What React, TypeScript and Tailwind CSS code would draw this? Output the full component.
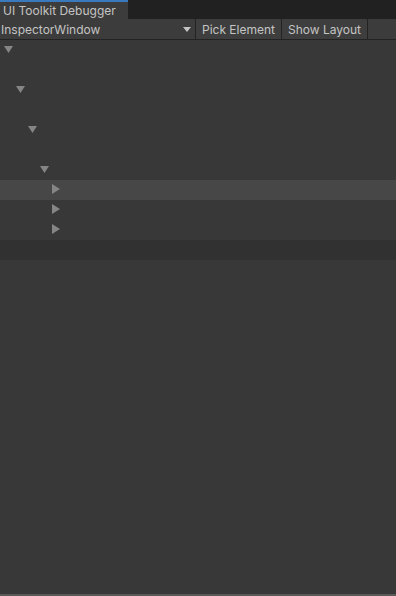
import React from "react";

type Row = { depth: number; arrow: "down" | "right" | null; tone?: "hover" | "dark" };

const ROWS: Row[] = [
  { depth: 0, arrow: "down" },
  { depth: 0, arrow: null },
  { depth: 1, arrow: "down" },
  { depth: 0, arrow: null },
  { depth: 2, arrow: "down" },
  { depth: 0, arrow: null },
  { depth: 3, arrow: "down" },
  { depth: 4, arrow: "right", tone: "hover" },
  { depth: 4, arrow: "right" },
  { depth: 4, arrow: "right" },
  { depth: 0, arrow: null, tone: "dark" },
];

const INDENT = [
  "pl-[4px]",
  "pl-[16px]",
  "pl-[28px]",
  "pl-[40px]",
  "pl-[52px]",
];

function Down() {
  return (
    <svg width="9" height="7" viewBox="0 0 9 7" className="mt-[-2px]">
      <polygon points="0,0 9,0 4.5,7" fill="#858585" />
    </svg>
  );
}

function Right() {
  return (
    <svg width="8" height="10" viewBox="0 0 8 10" className="mt-[-2px]">
      <polygon points="0,0 8,5 0,10" fill="#858585" />
    </svg>
  );
}

export default function App() {
  return (
    <div
      className="w-[396px] h-[596px] bg-[#383838] flex flex-col overflow-hidden text-[#c4c4c4]"
      style={{ fontFamily: "Inter, 'Noto Sans', sans-serif" }}
    >
      {/* tab strip */}
      <div className="h-[19px] bg-[#212121] flex shrink-0">
        <div className="w-[128px] bg-[#3c3c3c] border-t-2 border-[#3a79bb] flex items-center pl-[3px] text-[12px] leading-none">
          UI Toolkit Debugger
        </div>
      </div>

      {/* toolbar */}
      <div className="h-[21px] bg-[#3c3c3c] border-b border-[#232323] flex shrink-0 text-[12px] leading-none">
        <div className="w-[195px] flex items-center justify-between pl-[1px] pr-[4px] pt-[2px]">
          <span>InspectorWindow</span>
          <svg width="8" height="5" viewBox="0 0 8 5" className="mt-[-2px]">
            <polygon points="0,0 8,0 4,5" fill="#c4c4c4" />
          </svg>
        </div>
        <div className="w-[86px] border-l border-[#232323] flex items-center justify-center bg-[#3e3e3e] pt-[2px]">
          Pick Element
        </div>
        <div className="w-[87px] border-l border-r border-[#232323] flex items-center justify-center bg-[#3e3e3e] pt-[2px]">
          Show Layout
        </div>
      </div>

      {/* tree */}
      <div className="flex flex-col">
        {ROWS.map((r, i) => (
          <div
            key={i}
            className={`h-[20px] flex items-center ${INDENT[r.depth]} ${
              r.tone === "hover" ? "bg-[#474747]" : r.tone === "dark" ? "bg-[#313131]" : ""
            }`}
          >
            {r.arrow === "down" && <Down />}
            {r.arrow === "right" && <Right />}
          </div>
        ))}
      </div>

      <div className="flex-1" />
      <div className="h-[2px] bg-[#595959] shrink-0" />
    </div>
  );
}
